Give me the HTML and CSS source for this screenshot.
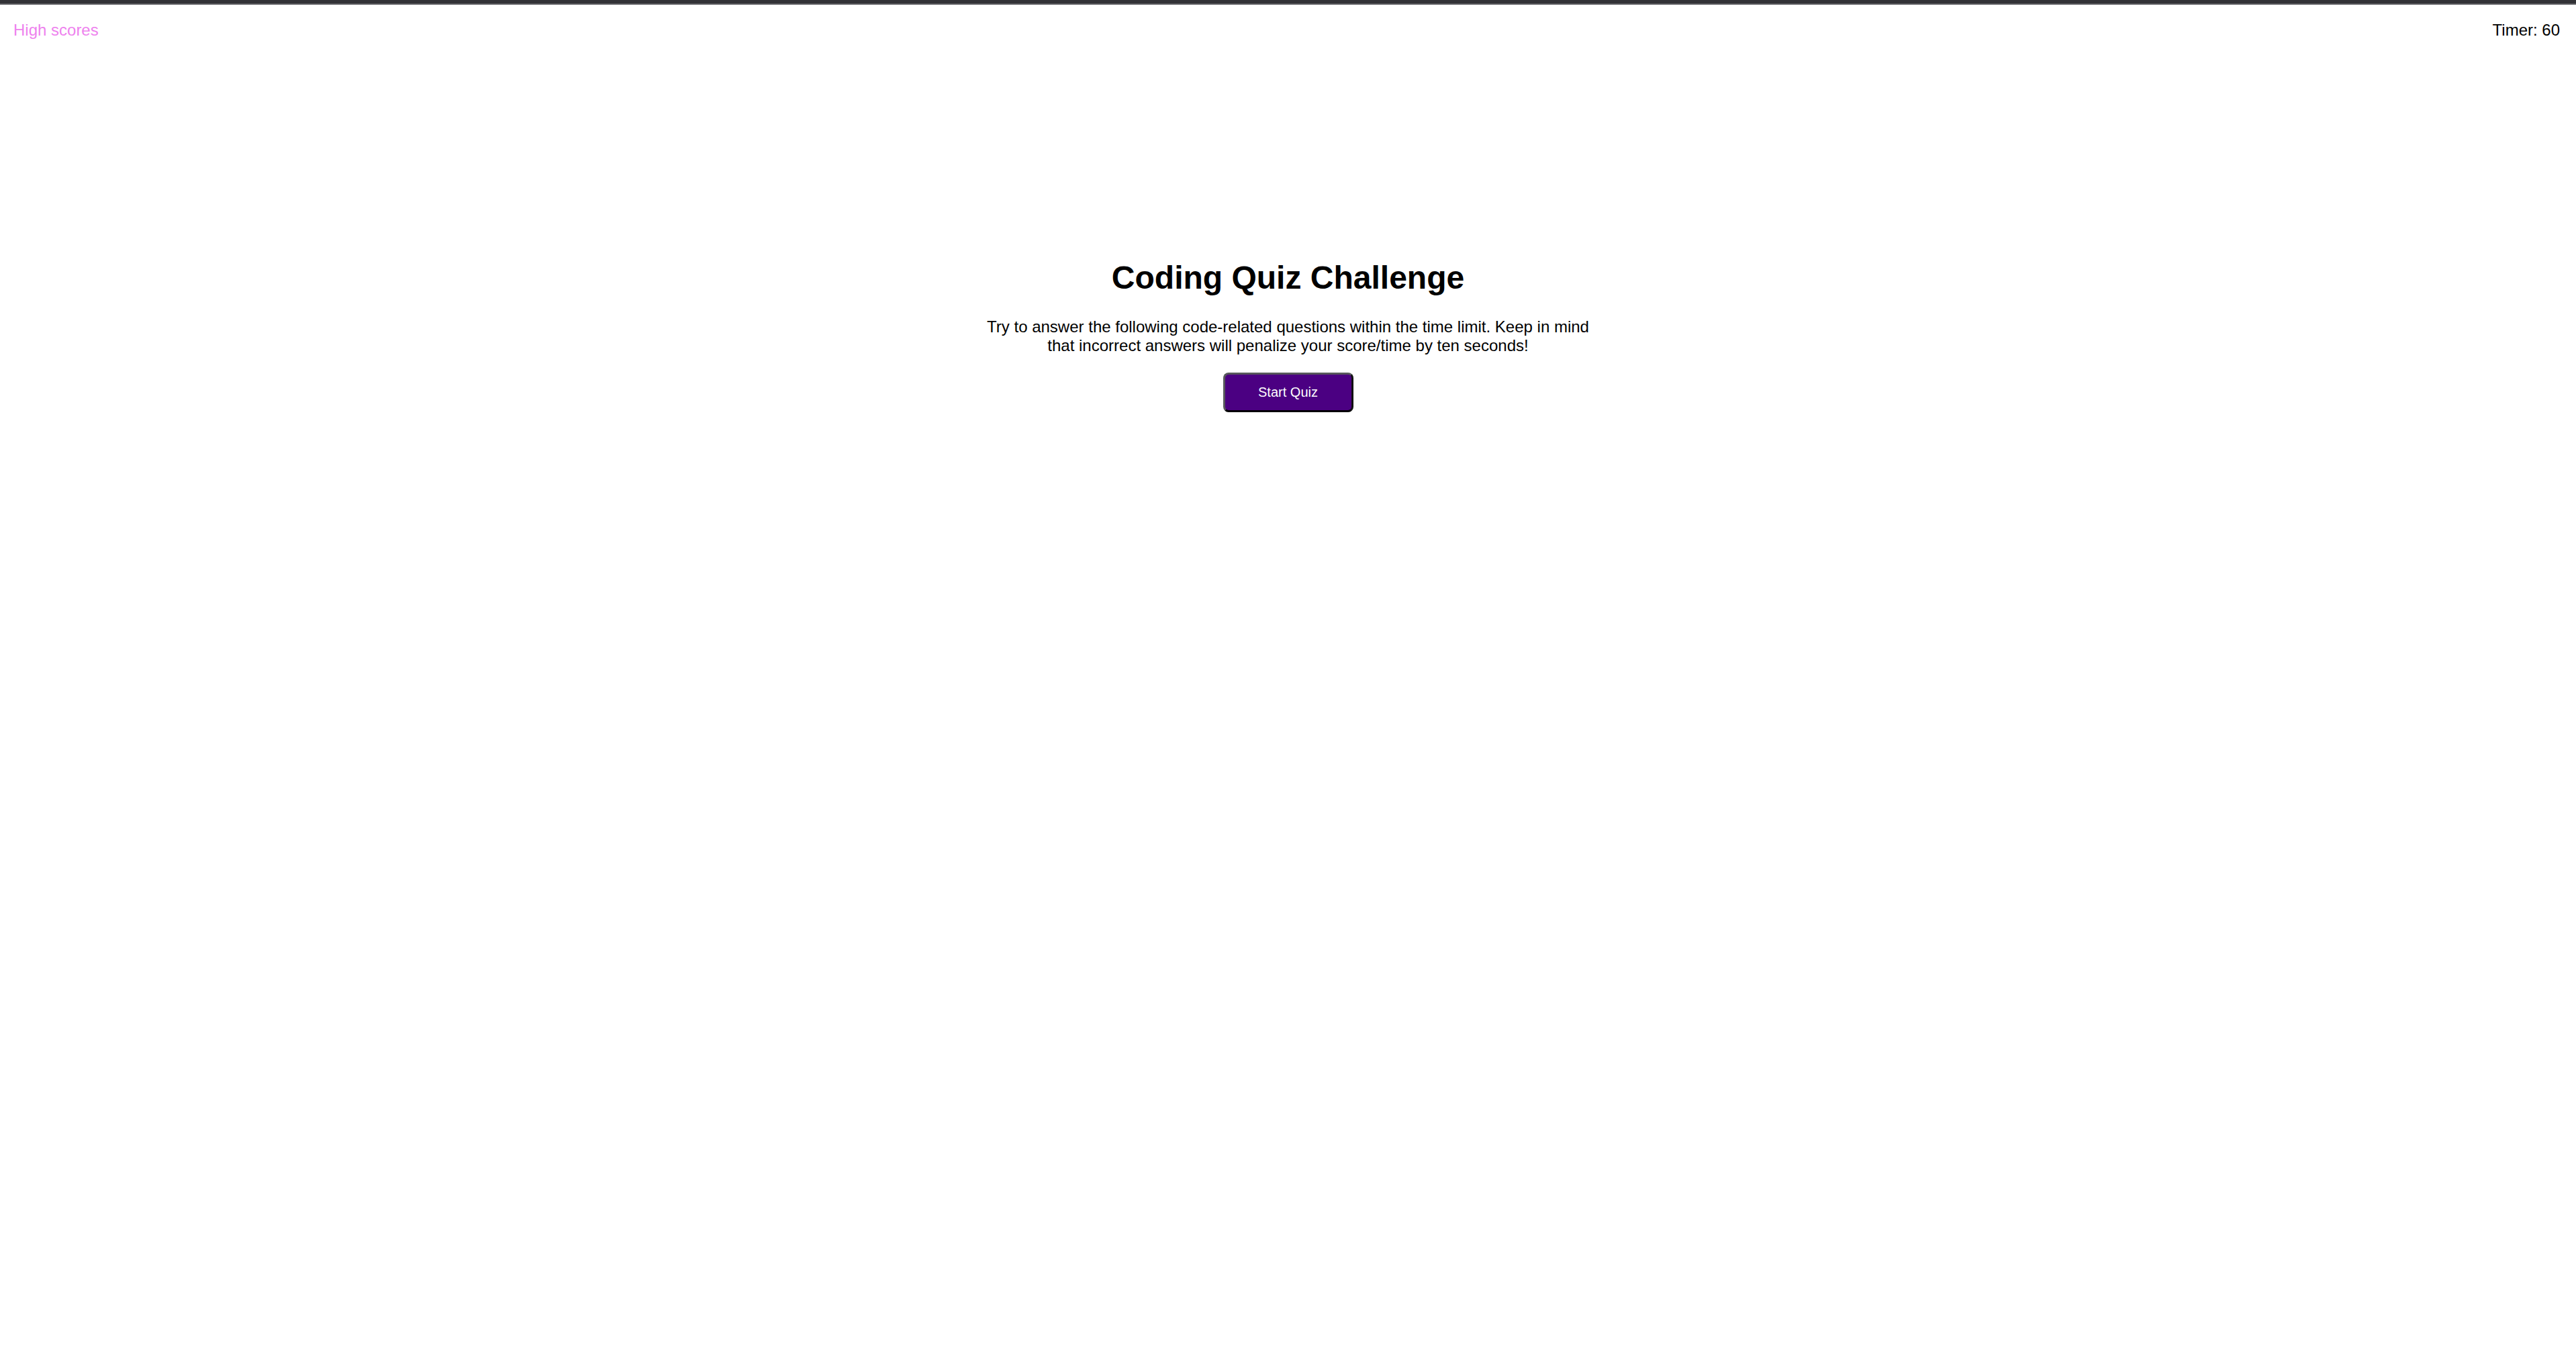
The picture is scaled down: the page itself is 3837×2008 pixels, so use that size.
FILE: index.html
```html
<!DOCTYPE html>
<html lang="en">
<head>
<meta charset="utf-8">
<title>Coding Quiz Challenge</title>
<link rel="stylesheet" href="styles.css">
</head>
<body>
<div class="topbar"></div>
<header class="header">
  <a class="high-scores" href="#">High scores</a>
  <div class="timer">Timer: 60</div>
</header>
<main class="intro">
  <h1 class="title">Coding Quiz Challenge</h1>
  <p class="lead">Try to answer the following code-related questions within the time limit. Keep in mind that incorrect answers will penalize your score/time by ten seconds!</p>
  <button class="start-btn" type="button">Start Quiz</button>
</main>
</body>
</html>
```
FILE: styles.css
```css
html, body {
  margin: 0;
  padding: 0;
  background: #ffffff;
}
body {
  font-family: "Liberation Sans", Arial, sans-serif;
  color: #000;
}
.topbar {
  height: 5px;
  background: #323236;
  border-bottom: 2px solid #5c5c60;
}
.header {
  display: flex;
  justify-content: space-between;
  align-items: flex-start;
  padding: 24px 24px 0 20px;
  font-size: 24px;
  line-height: normal;
}
.high-scores {
  color: violet;
  text-decoration: none;
}
.timer {
  color: #000;
}
.intro {
  display: flex;
  flex-direction: column;
  align-items: center;
  text-align: center;
  margin-top: 327px;
}
.title {
  margin: 0;
  font-size: 48px;
  font-weight: bold;
  line-height: normal;
}
.lead {
  margin: 32px 0 0;
  width: 900px;
  font-size: 24px;
  line-height: 28px;
}
.start-btn {
  margin-top: 26px;
  width: 194px;
  box-sizing: border-box;
  padding: 15px 0;
  font-family: "Liberation Sans", Arial, sans-serif;
  font-size: 20px;
  line-height: 23px;
  color: #fff;
  background: #4b0082;
  border-style: solid;
  border-width: 3px;
  border-color: #58585c #111 #000 #58585c;
  border-radius: 8px;
}
```
